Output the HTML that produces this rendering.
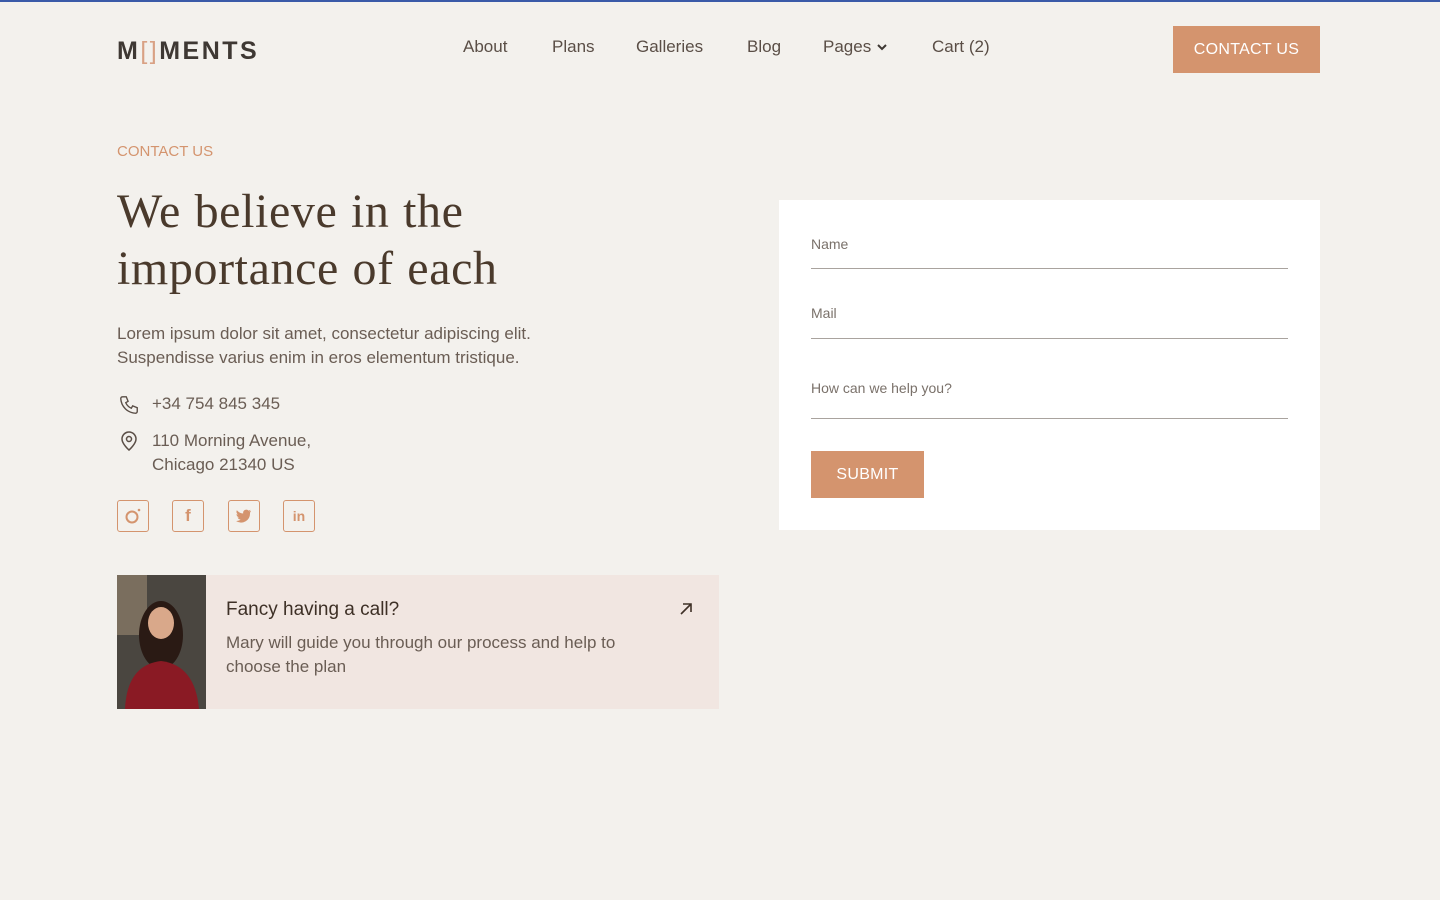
<!DOCTYPE html>
<html><head><meta charset="utf-8"><style>
*{margin:0;padding:0;box-sizing:border-box}
body{width:1440px;height:900px;background:#f3f1ed;font-family:"Liberation Sans",sans-serif;color:#5a4a3e;position:relative;overflow:hidden}
.abs{position:absolute}
.logo{left:117px;top:37px;font-size:25px;letter-spacing:2.5px;color:#3e3833;font-weight:bold}
.nav a{position:absolute;top:37px;font-size:17px;color:#5a4e46;text-decoration:none}
.btn{background:#d4946e;color:#fff;font-size:16px;letter-spacing:.3px;text-align:center}
h1{font-family:"Liberation Serif",serif;font-weight:400;font-size:48px;line-height:57px;color:#4a3a2c;left:117px;top:183px;letter-spacing:0.6px;word-spacing:1px}
.p{font-size:17px;line-height:24px;color:#6a5d54}
.soc{position:absolute;top:500px;width:32px;height:32px;border:1.5px solid #d4946e;border-radius:3px;display:flex;align-items:center;justify-content:center;color:#d4946e;font-weight:bold;font-size:15px}
.form{left:779px;top:200px;width:541px;height:330px;background:#fff}
.fl{position:absolute;left:32px;width:477px;border-bottom:1px solid #a9a39e;font-size:14px;color:#7a716a}
</style></head><body>
<div class="abs" style="left:0;top:0;width:1440px;height:2px;background:#3a5aa8"></div>
<div class="abs logo">M<span style="color:#d9a184;font-weight:normal">[]</span>MENTS</div>
<div class="nav"><a style="left:463px">About</a><a style="left:552px">Plans</a><a style="left:636px">Galleries</a><a style="left:747px">Blog</a><a style="left:823px">Pages <svg width="12" height="10" viewBox="0 0 12 10"><path d="M2 3l4 4 4-4" stroke="#3e3833" stroke-width="2" fill="none"/></svg></a><a style="left:932px">Cart (2)</a></div>
<div class="abs btn" style="left:1173px;top:26px;width:147px;height:47px;line-height:47px">CONTACT US</div>
<div class="abs" style="left:117px;top:143px;font-size:15px;color:#d4946e">CONTACT US</div>
<h1 class="abs">We believe in the<br>importance of each</h1>
<div class="abs p" style="left:117px;top:322px">Lorem ipsum dolor sit amet, consectetur adipiscing elit.<br>Suspendisse varius enim in eros elementum tristique.</div>
<svg class="abs" style="left:118px;top:394px" width="22" height="22" viewBox="0 0 24 24"><path d="M5 3l4 0 2 5-2.5 1.5a11 11 0 0 0 6 6L16 13l5 2v4a2 2 0 0 1-2 2A17 17 0 0 1 3 5a2 2 0 0 1 2-2z" fill="none" stroke="#5a4e46" stroke-width="1.5"/></svg>
<div class="abs p" style="left:152px;top:392px">+34 754 845 345</div>
<svg class="abs" style="left:119px;top:430px" width="20" height="22" viewBox="0 0 20 22"><path d="M10 20s-7-6-7-11a7 7 0 0 1 14 0c0 5-7 11-7 11z" fill="none" stroke="#5a4e46" stroke-width="1.5"/><circle cx="10" cy="9" r="2.5" fill="none" stroke="#5a4e46" stroke-width="1.5"/></svg>
<div class="abs p" style="left:152px;top:429px">110 Morning Avenue,<br>Chicago 21340 US</div>
<div class="soc" style="left:117px"><svg width="18" height="18" viewBox="0 0 18 18"><circle cx="8" cy="10" r="5.5" fill="none" stroke="#d4946e" stroke-width="2"/><circle cx="15" cy="3" r="1.3" fill="#d4946e"/></svg></div>
<div class="soc" style="left:172px;font-size:17px">f</div>
<div class="soc" style="left:228px"><svg width="16" height="14" viewBox="0 0 16 14"><path d="M15 2c-.6.3-1.2.4-1.8.5.7-.4 1.1-1 1.4-1.7-.6.4-1.3.6-2 .8A3.2 3.2 0 0 0 7.2 4.5 9 9 0 0 1 .9 1.2a3.2 3.2 0 0 0 1 4.3c-.5 0-1-.2-1.4-.4 0 1.6 1.100 2.9 2.6 3.2-.5.1-1 .2-1.5.1.4 1.3 1.6 2.2 3 2.2A6.5 6.5 0 0 1 0 12a9 9 0 0 0 14-8V3.6c.5-.4 1-.9 1-1.6z" fill="#d4946e"/></svg></div>
<div class="soc" style="left:283px;font-size:14px">in</div>
<div class="abs" style="left:117px;top:575px;width:602px;height:134px;background:#f1e6e1"></div>
<svg class="abs" style="left:117px;top:575px" width="89" height="134"><rect width="89" height="134" fill="#4a4640"/><rect x="0" y="0" width="30" height="60" fill="#7a6e5e"/><ellipse cx="44" cy="60" rx="22" ry="34" fill="#2a1a14"/><ellipse cx="44" cy="48" rx="13" ry="16" fill="#d9a88a"/><path d="M8 134 Q10 90 44 86 Q78 90 82 134z" fill="#8a1a24"/></svg>
<div class="abs" style="left:226px;top:599px;font-size:19px;color:#3e3026">Fancy having a call?</div>
<svg class="abs" style="left:679px;top:602px" width="14" height="14" viewBox="0 0 14 14"><path d="M2 12L12 2M4 2h8v8" stroke="#3e3026" stroke-width="1.6" fill="none"/></svg>
<div class="abs p" style="left:226px;top:631px;width:445px">Mary will guide you through our process and help to<br>choose the plan</div>
<div class="abs form">
<div class="fl" style="top:36px;height:33px">Name</div>
<div class="fl" style="top:105px;height:34px">Mail</div>
<div class="fl" style="top:180px;height:39px">How can we help you?</div>
<div class="abs btn" style="left:32px;top:251px;width:113px;height:47px;line-height:47px">SUBMIT</div>
</div>
</body></html>
